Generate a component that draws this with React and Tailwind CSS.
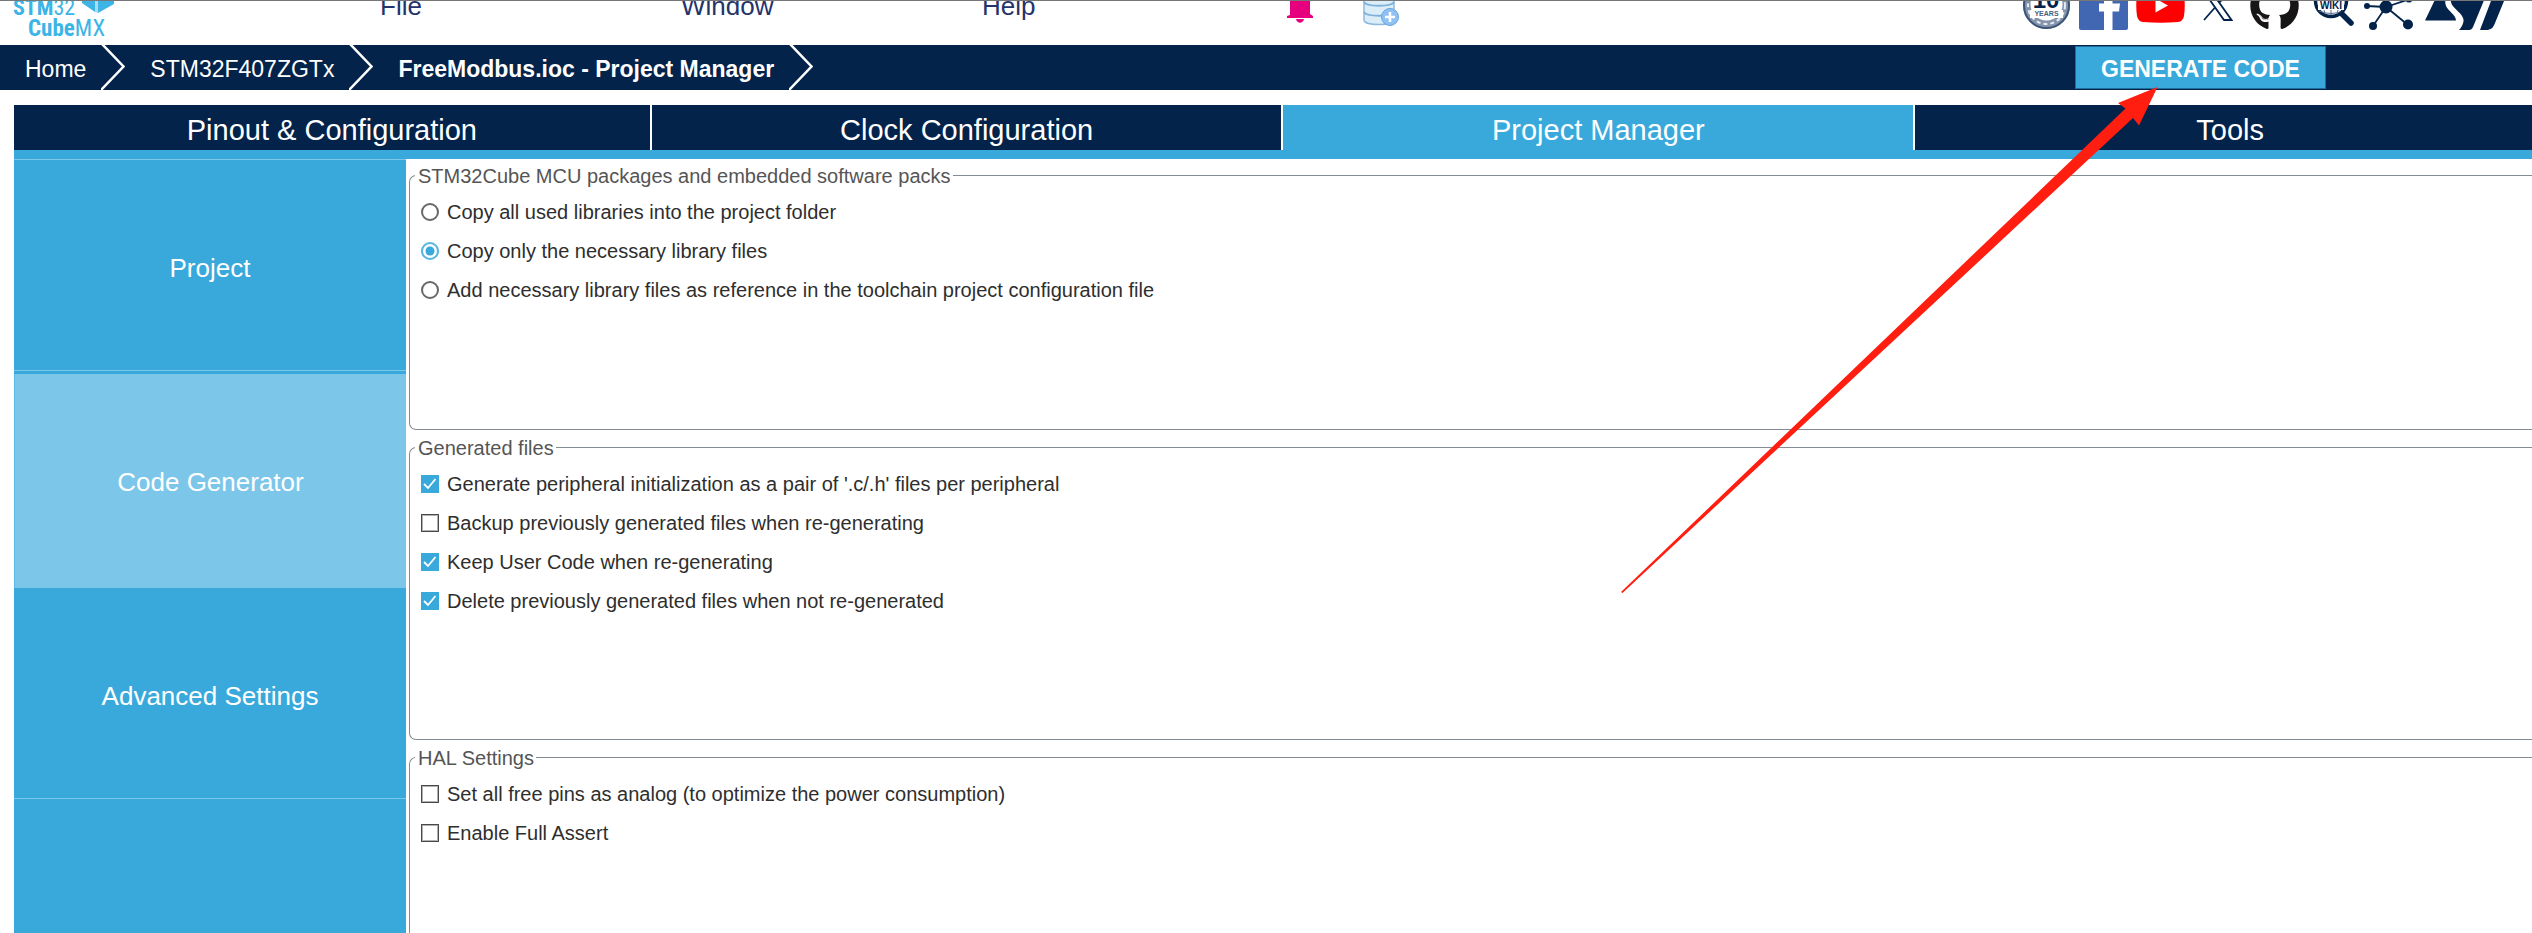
import React from "react";
import { FaGithub } from "react-icons/fa6";

const menus = ["File", "Window", "Help"];

const tabs = [
  { label: "Pinout & Configuration" },
  { label: "Clock Configuration" },
  { label: "Project Manager", active: true },
  { label: "Tools" },
];

const sections = [
  { label: "Project" },
  { label: "Code Generator", active: true },
  { label: "Advanced Settings" },
];

function CubeLogo() {
  return (
    <a href="#home" aria-label="STM32CubeMX" className="block">
      <svg width="110" height="45" viewBox="0 0 110 45" fill="#3cb4e6" fontFamily='"Liberation Sans Narrow", "Roboto Condensed", "Liberation Sans", sans-serif'>
        <text x="5" y="15" fontSize="22">
          <tspan fontWeight="700">STM</tspan>32
        </text>
        <text x="20" y="36" fontSize="23">
          <tspan fontWeight="700">Cube</tspan>MX
        </text>
        <path d="M74 -8 L87 -2 L87 12 L74 3 Z" />
        <path d="M87 -2 L90 -2 L90 13 L87 12 Z" fill="#a6dcf4" />
        <path d="M90 -2 L106 -8 L106 4 L90 13 Z" />
      </svg>
    </a>
  );
}

function Bell() {
  return (
    <svg width="28" height="34" viewBox="0 0 28 34" fill="#e6007e">
      <path d="M4 26 V12 C4 5 8 2 14 2 C20 2 24 5 24 12 V25 L27 27 V29 H1 V27 Z" />
      <path d="M10 30 H18 C17 35 11 35 10 30 Z" />
    </svg>
  );
}

function Database() {
  return (
    <svg width="38" height="40" viewBox="0 0 38 40">
      <path d="M2 5 C2 0 32 0 32 5 V34 C32 40 2 40 2 34 Z" fill="#dcedfa" stroke="#8fb9dc" strokeWidth="1.5" />
      <path d="M2 16 C4 21 30 21 32 16 M2 26 C4 31 30 31 32 26" fill="none" stroke="#7fb0d8" strokeWidth="2" />
      <circle cx="28" cy="31" r="8.5" fill="#8fc2f3" stroke="#6aa5dc" />
      <path d="M28 26 V36 M23 31 H33" stroke="#fff" strokeWidth="2.5" />
    </svg>
  );
}

function Anniversary() {
  return (
    <svg width="49" height="49" viewBox="0 0 49 49">
      <circle cx="24.5" cy="24.5" r="23.5" fill="#8494ab" />
      <circle cx="24.5" cy="24.5" r="22.5" fill="none" stroke="#3a5578" strokeWidth="2" />
      <circle cx="24.5" cy="24.5" r="18.5" fill="none" stroke="#e8ecf1" strokeWidth="2" strokeDasharray="4 3" />
      <circle cx="24.5" cy="23.5" r="16" fill="#fff" />
      <text x="24" y="27" textAnchor="middle" fontFamily="Liberation Sans, sans-serif" fontWeight="700" fontSize="24" fill="#03234b">
        10
      </text>
      <rect x="8" y="29" width="33" height="8" fill="#fff" />
      <text x="24.5" y="35" textAnchor="middle" fontFamily="Liberation Sans, sans-serif" fontWeight="700" fontSize="7" fill="#46607f">
        YEARS
      </text>
    </svg>
  );
}

function Facebook() {
  return (
    <svg width="49" height="49" viewBox="0 0 49 49">
      <rect width="49" height="49" rx="2" fill="#4267b2" />
      <path d="M25 49 V30.500 H20 V22.500 H25 V17 C25 11 29 7.500 34 7.500 H40 V14.500 H36.500 C34 14.500 33.500 16 33.500 18 V22.500 H41 L40 30.500 H33.500 V49 Z" fill="#fff" />
    </svg>
  );
}

function Youtube() {
  return (
    <svg width="49" height="35" viewBox="0 0 49 35">
      <path d="M7 1 Q24.500 -1 42 1 Q47 1.500 48 7 Q49.500 17.500 48 28 Q47 33.500 42 34 Q24.500 35.500 7 34 Q2 33.500 1 28 Q-0.500 17.500 1 7 Q2 1.500 7 1 Z" fill="#f00" />
      <path d="M19.500 10.500 L32 17.500 L19.500 24.500 Z" fill="#fff" />
    </svg>
  );
}

function XMark() {
  return (
    <svg width="31" height="31" viewBox="0 0 31 31" fill="none" stroke="#03234b" strokeWidth="1.8">
      <path d="M1.500 1 H9 L29.500 30 H22 Z M27.500 1 L17.500 12.500 M2 30 L13 17.500" />
    </svg>
  );
}

function Wiki() {
  return (
    <svg width="49" height="49" viewBox="0 0 49 49">
      <circle cx="24" cy="20" r="15.500" fill="#fff" stroke="#03234b" strokeWidth="3.500" />
      <path d="M13 14 Q24 9 35 14 M12 30 Q24 35 36 30 M24 7 V34 M18 8 Q14 20 18 33 M30 8 Q34 20 30 33" fill="none" stroke="#5b7090" strokeWidth="1" />
      <rect x="11" y="19" width="26" height="10" fill="#fff" />
      <text x="24" y="28" textAnchor="middle" fontFamily="Liberation Sans, sans-serif" fontWeight="700" fontSize="10" fill="#03234b">
        WIKI
      </text>
      <path d="M35 33 L44 42" stroke="#03234b" strokeWidth="5.500" strokeLinecap="round" />
    </svg>
  );
}

function Network() {
  return (
    <svg width="49" height="49" viewBox="0 0 49 49" fill="#03234b">
      <path d="M22 26 L3 25 M22 26 L46 18 M22 26 L9 45 M22 26 L44 44 M22 26 L16 6" stroke="#03234b" strokeWidth="1.800" />
      <circle cx="22" cy="26" r="6.500" />
      <circle cx="3" cy="25" r="3" />
      <circle cx="45" cy="18" r="3.500" />
      <circle cx="9" cy="45" r="4" />
      <circle cx="44" cy="43.500" r="5" />
      <circle cx="16" cy="6" r="4" />
    </svg>
  );
}

function StLogo() {
  return (
    <svg width="79" height="49" viewBox="0 0 79 49" fill="#03234b">
      <path d="M0 39.500 L18 2 H79 L77 9 H38 C24 9 18 17 21 25 C23 30 31 34 31 39.500 Z" />
      <path d="M26 21 C25 15 28 12 34 12 H62 L48 46 C47 48 46 49 44 49 H34 C36 47 40 41 38 37 C36 31 27 27 26 21 Z" />
      <path d="M69 12 H79 V20 L70 42 C68 47 66 49 61 49 H55 Z" />
    </svg>
  );
}

function HeaderLink({ label, children }) {
  return (
    <a href={"#" + label.toLowerCase()} aria-label={label} className="flex w-[49px] items-center justify-center">
      {children}
    </a>
  );
}

function Header() {
  return (
    <header className="h-[45px] overflow-hidden border-t border-[#777] bg-white">
      <div className="-mt-5 flex h-[49px] items-center">
        <div className="-mb-[15px] w-[380px] shrink-0 self-end pl-2">
          <CubeLogo />
        </div>
        {menus.map((menu) => (
          <div key={menu} className="w-[301px] pt-[2px]">
            <button type="button" className="text-[26px] leading-[30px] text-[#24336b]">
              {menu}
            </button>
          </div>
        ))}
        <button type="button" aria-label="Notifications" className="ml-[3px]">
          <Bell />
        </button>
        <button type="button" aria-label="Software packs" className="ml-12">
          <Database />
        </button>
        <nav aria-label="Links" className="ml-auto flex items-center gap-2 pr-7">
          <HeaderLink label="Anniversary"><Anniversary /></HeaderLink>
          <HeaderLink label="Facebook"><Facebook /></HeaderLink>
          <HeaderLink label="YouTube"><Youtube /></HeaderLink>
          <HeaderLink label="X"><XMark /></HeaderLink>
          <HeaderLink label="GitHub"><FaGithub size={50} color="#171515" /></HeaderLink>
          <HeaderLink label="Wiki"><Wiki /></HeaderLink>
          <HeaderLink label="Community"><Network /></HeaderLink>
          <a href="#st" aria-label="STMicroelectronics" className="ml-1"><StLogo /></a>
        </nav>
      </div>
    </header>
  );
}

function Crumb({ children, current }) {
  return (
    <li className="flex items-center">
      <a href="#crumb" aria-current={current ? "page" : undefined} className={current ? "pt-[3px] pr-[15px] pl-[25px] font-bold" : "pt-[3px] pr-[15px] pl-[25px]"}>
        {children}
      </a>
      <svg width="24" height="45" viewBox="0 0 24 45" fill="none" stroke="#fff" strokeWidth="2.500">
        <path d="M1 -1 L22.500 21.500 L0 45" />
      </svg>
    </li>
  );
}

function Breadcrumbs() {
  return (
    <div className="flex h-[45px] items-center justify-between bg-[#03234b] pr-[206px] text-[23px] text-white">
      <nav aria-label="Breadcrumb">
        <ol className="flex">
          <Crumb>Home</Crumb>
          <Crumb>STM32F407ZGTx</Crumb>
          <Crumb current>FreeModbus.ioc - Project Manager</Crumb>
        </ol>
      </nav>
      <button type="button" className="h-[43px] w-[251px] border border-[#1f6d9c] bg-[#39a9dc] pt-[3px] font-bold">
        GENERATE CODE
      </button>
    </div>
  );
}

function Tabs() {
  return (
    <nav aria-label="Views" className="mt-[15px] -mr-[13px] ml-[14px] grid grid-cols-[636fr_632fr_632fr_632fr] border-b-[9px] border-[#39a9dc]">
      {tabs.map((tab, i) => (
        <button
          key={tab.label}
          type="button"
          className={
            "h-[45px] pt-1 text-[29px] leading-[34px] text-white " +
            (tab.active ? "bg-[#39a9dc] " : "bg-[#03234b] ") +
            (i > 0 ? "border-l-2 border-white" : "")
          }
        >
          {tab.label}
        </button>
      ))}
    </nav>
  );
}

function Sidebar() {
  return (
    <nav aria-label="Project settings" className="w-[392px] shrink-0 border-t border-[#7cc6e9] bg-[#39a9dc]">
      {sections.map((s) => (
        <button
          key={s.label}
          type="button"
          className={"block h-[214px] w-full text-[26px] text-white " + (s.active ? "border-l border-[#5cb8e4] bg-[#7cc6e9]" : "pb-[3px]")}
        >
          <span className={"flex h-full items-center justify-center " + (s.active ? "pt-[2px]" : "border-b border-[#7cc6e9] pt-[6px]")}>{s.label}</span>
        </button>
      ))}
    </nav>
  );
}

function Group({ title, className, children }) {
  return (
    <fieldset className={"min-w-0 border border-r-0 border-[#868c94] pl-[11px] " + className}>
      <legend className="-ml-[6px] pt-[2px] pr-[2px] pl-[3px] text-[20px] leading-6 text-[#555]">{title}</legend>
      <div className="pt-1">{children}</div>
    </fieldset>
  );
}

function Choice({ type, name, label, checked }) {
  const radio = type === "radio";
  return (
    <label className="flex h-[39px] w-fit items-center gap-2 text-[20px] leading-6 text-[#2e2e2e]">
      <span className="grid">
        <input
          type={type}
          name={name}
          defaultChecked={checked}
          className={
            radio
              ? "peer col-start-1 row-start-1 size-[18px] appearance-none rounded-full border-2 border-[#686868] bg-white checked:border-[#56b5e1]"
              : "peer col-start-1 row-start-1 size-[18px] appearance-none border border-[#4a4a4a] bg-white shadow-[inset_0_0_0_1px_#b0b0b0] checked:border-[#39a9dc] checked:bg-[#39a9dc] checked:shadow-none"
          }
        />
        <svg viewBox="0 0 18 18" className="pointer-events-none invisible col-start-1 row-start-1 size-[18px] peer-checked:visible">
          {radio ? (
            <circle cx="9" cy="9" r="4.500" fill="#39a9dc" />
          ) : (
            <path d="M3 9 L7 13 L14.500 4" fill="none" stroke="#fff" strokeWidth="1.800" />
          )}
        </svg>
      </span>
      {label}
    </label>
  );
}

function CodeGenerator() {
  return (
    <main className="flex min-w-0 flex-1 flex-col gap-1 pt-[3px] pl-[3px]">
      <Group title="STM32Cube MCU packages and embedded software packs" className="h-[268px] rounded-l-[7px]">
        <Choice type="radio" name="libraries" label="Copy all used libraries into the project folder" />
        <Choice type="radio" name="libraries" label="Copy only the necessary library files" checked />
        <Choice type="radio" name="libraries" label="Add necessary library files as reference in the toolchain project configuration file" />
      </Group>
      <Group title="Generated files" className="h-[306px] rounded-l-[7px]">
        <Choice type="checkbox" name="pair" label="Generate peripheral initialization as a pair of '.c/.h' files per peripheral" checked />
        <Choice type="checkbox" name="backup" label="Backup previously generated files when re-generating" />
        <Choice type="checkbox" name="keep" label="Keep User Code when re-generating" checked />
        <Choice type="checkbox" name="delete" label="Delete previously generated files when not re-generated" checked />
      </Group>
      <Group title="HAL Settings" className="flex-1 rounded-tl-[7px] border-b-0">
        <Choice type="checkbox" name="analog" label="Set all free pins as analog (to optimize the power consumption)" />
        <Choice type="checkbox" name="assert" label="Enable Full Assert" />
      </Group>
    </main>
  );
}

function PointerArrow() {
  return (
    <svg width="537" height="507" viewBox="0 0 537 507" className="pointer-events-none absolute top-[87px] right-[374px]" fill="#ff1e10" aria-hidden="true">
      <path d="M536.500 0 L497 16 L504.500 21.500 L0 505 L1.500 506 L512 31 L518 38.500 Z" />
    </svg>
  );
}

export default function App() {
  return (
    <div className='relative flex min-h-screen flex-col overflow-hidden bg-white font-["Liberation_Sans",Arial,sans-serif]'>
      <Header />
      <Breadcrumbs />
      <Tabs />
      <div className="flex flex-1 pl-[14px]">
        <Sidebar />
        <CodeGenerator />
      </div>
      <PointerArrow />
    </div>
  );
}
